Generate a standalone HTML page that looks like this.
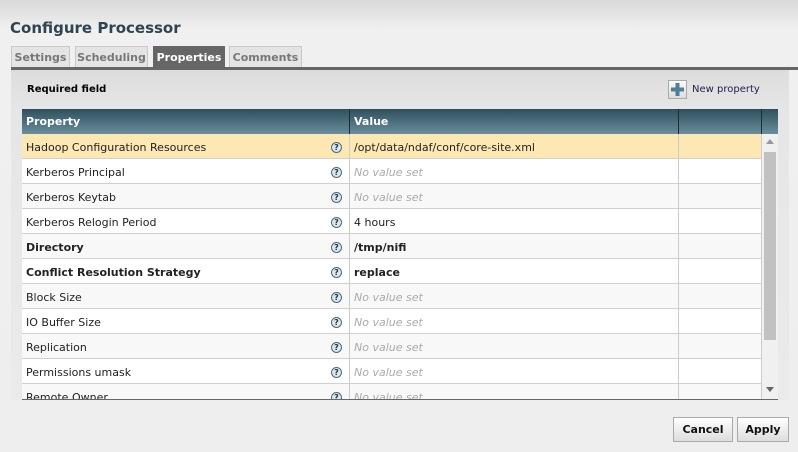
<!DOCTYPE html>
<html><head><style>
*{margin:0;padding:0;box-sizing:border-box}
body{width:798px;height:452px;overflow:hidden;font-family:"DejaVu Sans","Liberation Sans",sans-serif;background:linear-gradient(#d9d9d9 0,#f0f0f0 30px,#eeeeee 100%);position:relative}
.title{position:absolute;left:10px;top:19px;font-size:15px;font-weight:bold;color:#2f4450}
.tab{position:absolute;top:46px;height:22px;font-size:11px;font-weight:bold;color:#777;background:#e4e4e4;border:1px solid #c8c8c8;border-bottom:none;text-align:center;line-height:21px}
.tab.on{background:#666;color:#fff;border-color:#666}
.bar{position:absolute;left:11px;top:67px;width:787px;height:3px;background:#666}
.panel{position:absolute;left:11px;top:70px;width:778px;height:330px;background:linear-gradient(#dcdcdc,#e6e6e6 40px,#eaeaea)}
.req{position:absolute;left:27px;top:84px;font-size:10px;font-weight:bold;color:#000}
.np{position:absolute;left:668px;top:80px;width:19px;height:19px;border:1px solid #aaa;background:linear-gradient(#fafafa,#ddd)}
.npt{position:absolute;left:692px;top:84px;font-size:10px;color:#262050}
.tbl{position:absolute;left:22px;top:109px;width:756px;height:291px;background:#fff;overflow:hidden;border-bottom:1px solid #666}
.hd{position:absolute;left:0;top:0;width:756px;height:25px;background:linear-gradient(#2f4f5c,#6a8e9e)}
.hd div{position:absolute;top:0;height:25px;line-height:25px;color:#fff;font-weight:bold;font-size:11px;padding-left:4px;border-right:1px solid #1c2c34}
.row{position:absolute;left:0;width:740px;height:25px;border-bottom:1px solid #d0d0d0;font-size:11px;color:#222}
.row div{position:absolute;top:0;height:24px;line-height:24px;padding-top:2px;border-right:1px solid #ccc}
.c1{left:0;width:328px;padding-left:4px}
.c2{left:328px;width:329px;padding-left:4px}
.c3{left:657px;width:83px}
.q{position:absolute;left:309px;top:8px;width:11px;height:11px;border-radius:50%;border:1px solid #4a6a7a;background:#dde8ee;font-size:8px;line-height:9px;text-align:center;color:#234;font-weight:bold}
.nv{color:#aaa;font-style:italic}
.b{font-weight:bold}
.sb{position:absolute;left:740px;top:25px;width:16px;height:266px;background:#f0f0f0}
.th{position:absolute;left:2px;top:18px;width:12px;height:188px;background:#c1c1c1}
.btn{position:absolute;top:417px;height:25px;border:1px solid #aaa;background:linear-gradient(#fff,#ddd);font-size:11px;font-weight:bold;text-align:center;line-height:23px;color:#111}
</style></head><body>
<div class="title">Configure Processor</div>
<div class="tab" style="left:11px;width:59px">Settings</div>
<div class="tab" style="left:75px;width:73px">Scheduling</div>
<div class="tab on" style="left:153px;width:72px">Properties</div>
<div class="tab" style="left:229px;width:73px">Comments</div>
<div class="bar"></div>
<div class="panel"></div>
<div class="req">Required field</div>
<div class="np"><svg width="17" height="17" viewBox="0 0 17 17"><path d="M6.5 2h4v4.5h4.5v4h-4.5v4.5h-4v-4.5h-4.5v-4h4.5z" fill="#4f7f96"/></svg></div>
<div class="npt">New property</div>
<div class="tbl">
<div class="hd"><div style="left:0;width:328px">Property</div><div style="left:328px;width:329px">Value</div><div style="left:657px;width:83px"></div></div>
<div class="row" style="top:25px;background:#fde8b4"><div class="c1">Hadoop Configuration Resources<span class="q">?</span></div><div class="c2">/opt/data/ndaf/conf/core-site.xml</div><div class="c3"></div></div>
<div class="row" style="top:50px;background:#fff"><div class="c1">Kerberos Principal<span class="q">?</span></div><div class="c2 nv">No value set</div><div class="c3"></div></div>
<div class="row" style="top:75px;background:#f8f8f8"><div class="c1">Kerberos Keytab<span class="q">?</span></div><div class="c2 nv">No value set</div><div class="c3"></div></div>
<div class="row" style="top:100px;background:#fff"><div class="c1">Kerberos Relogin Period<span class="q">?</span></div><div class="c2">4 hours</div><div class="c3"></div></div>
<div class="row b" style="top:125px;background:#f8f8f8"><div class="c1">Directory<span class="q">?</span></div><div class="c2">/tmp/nifi</div><div class="c3"></div></div>
<div class="row b" style="top:150px;background:#fff"><div class="c1">Conflict Resolution Strategy<span class="q">?</span></div><div class="c2">replace</div><div class="c3"></div></div>
<div class="row" style="top:175px;background:#f8f8f8"><div class="c1">Block Size<span class="q">?</span></div><div class="c2 nv">No value set</div><div class="c3"></div></div>
<div class="row" style="top:200px;background:#fff"><div class="c1">IO Buffer Size<span class="q">?</span></div><div class="c2 nv">No value set</div><div class="c3"></div></div>
<div class="row" style="top:225px;background:#f8f8f8"><div class="c1">Replication<span class="q">?</span></div><div class="c2 nv">No value set</div><div class="c3"></div></div>
<div class="row" style="top:250px;background:#fff"><div class="c1">Permissions umask<span class="q">?</span></div><div class="c2 nv">No value set</div><div class="c3"></div></div>
<div class="row" style="top:275px;background:#f8f8f8"><div class="c1">Remote Owner<span class="q">?</span></div><div class="c2 nv">No value set</div><div class="c3"></div></div>
<div class="sb"><svg style="position:absolute;left:4px;top:5px" width="8" height="5"><path d="M0 5L4 0L8 5z" fill="#999"/></svg><div class="th"></div><svg style="position:absolute;left:4px;top:253px" width="8" height="5"><path d="M0 0L4 5L8 0z" fill="#666"/></svg></div>
</div>
<div class="btn" style="left:673px;width:60px">Cancel</div>
<div class="btn" style="left:737px;width:52px">Apply</div>
</body></html>
